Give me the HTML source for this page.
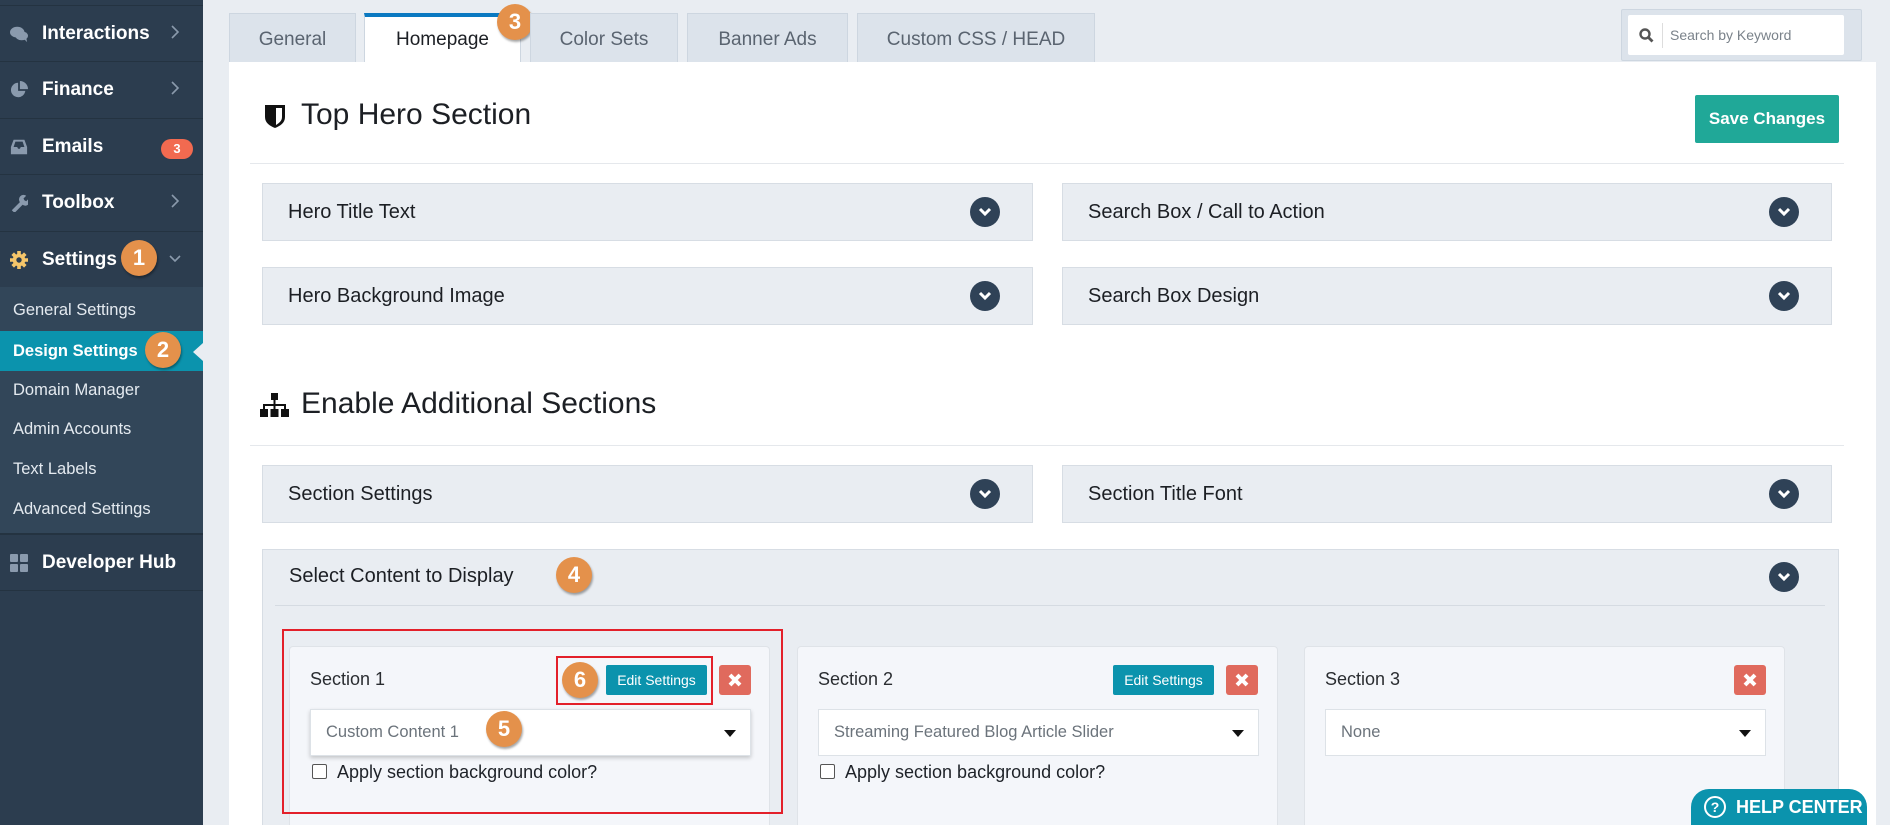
<!DOCTYPE html>
<html style="width:1890px;height:825px;overflow:hidden"><head><meta charset="utf-8"><style>
*{box-sizing:border-box;margin:0;padding:0}
body{width:1890px;height:825px;overflow:hidden;background:#e9edf2;font-family:"Liberation Sans",sans-serif;position:relative;color:#1e2228}
.abs{position:absolute}
#sb{left:0;top:0;width:203px;height:825px;background:#2c3d4f}
.it{position:absolute;left:0;width:203px;height:56px;border-top:1px solid #243341;color:#fff;font-size:19px;font-weight:bold;display:flex;align-items:center;padding-left:42px}
.it .ic{position:absolute;left:10px;top:19px;width:18px;height:18px}
.it .ch{position:absolute;left:170px;top:18px;width:10px;height:16px}
#sub{left:0;top:287px;width:203px;height:246px;background:#324659}
.si{position:absolute;left:13px;color:#e4eaf0;font-size:16.5px}
.badge{position:absolute;width:36px;height:36px;border-radius:50%;background:#e4914b;color:#fff;font-weight:bold;font-size:22px;text-align:center;line-height:36px;box-shadow:1px 2px 2px rgba(0,0,0,.35)}
.tab{position:absolute;top:13px;height:50px;background:#dce3eb;border:1px solid #cdd6e0;border-bottom:none;color:#5a6470;font-size:19px;text-align:center;line-height:52px}
#panel{left:229px;top:62px;width:1647px;height:763px;background:#fff}
.h{position:absolute;font-size:30px;color:#1c1f24}
.hr{position:absolute;left:250px;width:1594px;height:1px;background:#e5e8ec}
.acc{position:absolute;height:58px;background:#e9edf2;border:1px solid #d7dde4;font-size:20px;padding-left:25px;line-height:56px;color:#1c1f24}
.cv{position:absolute;right:32px;top:13px;width:30px;height:30px;border-radius:50%;background:#2f4257}
.cv svg{position:absolute;left:8px;top:9px}
.card{position:absolute;top:646px;width:481px;height:179px;background:#f4f6fa;border:1px solid #dfe3e8;border-bottom:none;border-radius:4px 4px 0 0}
.ct{position:absolute;left:20px;top:22px;font-size:18px;color:#2a2d31}
.sel{position:absolute;left:20px;top:62px;width:441px;height:47px;background:#fff;border:1px solid #dde2e7;font-size:16.5px;color:#6b737b;padding-left:15px;line-height:45px}
.sel:after{content:"";position:absolute;right:14px;top:20px;border:6px solid transparent;border-top:7px solid #111}
.cb{position:absolute;left:22px;top:115px;font-size:18px;color:#1e2228}
.cb i{display:inline-block;width:15px;height:15px;border:1.5px solid #555;border-radius:2px;background:#fff;vertical-align:-1px;margin-right:10px}
.es{position:absolute;top:18px;width:101px;height:30px;background:#0b93ad;color:#fff;font-size:14px;text-align:center;line-height:30px;border-radius:2px}
.x{position:absolute;top:18px;width:32px;height:30px;background:#e06a5d;border-radius:3px}
</style></head><body>
<div id="sb" class="abs">
 <div class="it" style="top:5px">Interactions<svg class="ch" viewBox="0 0 10 16"><path d="M2 2l6 6-6 6" fill="none" stroke="#8a9aac" stroke-width="1.6"/></svg>
  <svg class="ic" viewBox="0 0 20 18"><ellipse cx="8" cy="7" rx="8" ry="6" fill="#8a9aad"/><ellipse cx="13" cy="11" rx="7" ry="5" fill="#8a9aad"/><path d="M15 14l4 4-1-5z" fill="#8a9aad"/></svg></div>
 <div class="it" style="top:61px">Finance<svg class="ch" viewBox="0 0 10 16"><path d="M2 2l6 6-6 6" fill="none" stroke="#8a9aac" stroke-width="1.6"/></svg>
  <svg class="ic" viewBox="0 0 20 20"><path d="M9 2a8 8 0 1 0 8 9H9z" fill="#8a9aad"/><path d="M11 0v9h9a9 9 0 0 0-9-9z" fill="#8a9aad"/></svg></div>
 <div class="it" style="top:118px">Emails<span style="position:absolute;left:161px;top:20px;width:32px;height:20px;border-radius:10px;background:#f26a50;font-size:13px;text-align:center;line-height:20px">3</span>
  <svg class="ic" viewBox="0 0 20 18"><path d="M1 9l3-8h12l3 8v8H1z M4 9h4l1 2h2l1-2h4l-2-6H6z" fill="#8a9aad" fill-rule="evenodd"/></svg></div>
 <div class="it" style="top:174px">Toolbox<svg class="ch" viewBox="0 0 10 16"><path d="M2 2l6 6-6 6" fill="none" stroke="#8a9aac" stroke-width="1.6"/></svg>
  <svg class="ic" viewBox="0 0 20 20"><path d="M2 18l9-9a5 5 0 0 1 7-7l-3 3 1 2 2 1 3-3a5 5 0 0 1-7 7l-9 9z" fill="#8a9aad"/></svg></div>
 <div class="it" style="top:231px">Settings<svg class="ch" style="width:14px;left:168px;top:22px;height:10px" viewBox="0 0 14 10"><path d="M2 2l5 5 5-5" fill="none" stroke="#8a9aac" stroke-width="1.6"/></svg>
  <svg class="ic" viewBox="0 0 20 20"><circle cx="10" cy="10" r="7" fill="#f6c66a"/><g stroke="#f6c66a" stroke-width="4"><path d="M10 0v20M0 10h20M3 3l14 14M17 3L3 17"/></g><circle cx="10" cy="10" r="3" fill="#2c3d4f"/></svg></div>
 <div class="badge" style="left:121px;top:240px">1</div>
</div>
<div id="sub" class="abs">
 <div class="si" style="top:14px">General Settings</div>
 <div style="position:absolute;left:0;top:44px;width:203px;height:40px;background:#0b93ad"></div>
 <div class="si" style="top:55px;color:#fff;font-weight:bold">Design Settings</div>
 <div style="position:absolute;left:193px;top:56px;border:9px solid transparent;border-right:10px solid #e9edf2;border-left:none"></div>
 <div class="badge" style="left:145px;top:45px">2</div>
 <div class="si" style="top:94px">Domain Manager</div>
 <div class="si" style="top:133px">Admin Accounts</div>
 <div class="si" style="top:173px">Text Labels</div>
 <div class="si" style="top:213px">Advanced Settings</div>
</div>
<div class="it" style="top:533px;border-top:2px solid #243341;height:58px;border-bottom:1px solid #243341">Developer Hub
 <svg class="ic" viewBox="0 0 18 18"><rect x="0" y="0" width="8" height="8" rx="1" fill="#8a9aad"/><rect x="10" y="0" width="8" height="8" rx="1" fill="#8a9aad"/><rect x="0" y="10" width="8" height="8" rx="1" fill="#8a9aad"/><rect x="10" y="10" width="8" height="8" rx="1" fill="#8a9aad"/></svg></div>

<div class="tab" style="left:229px;width:127px">General</div>
<div class="tab" style="left:364px;width:157px;background:#fff;color:#1c1f24;border-top:4px solid #0b79c1;line-height:46px">Homepage</div>
<div class="badge" style="left:497px;top:4px">3</div>
<div class="tab" style="left:530px;width:148px">Color Sets</div>
<div class="tab" style="left:687px;width:161px">Banner Ads</div>
<div class="tab" style="left:857px;width:238px">Custom CSS / HEAD</div>
<div class="abs" style="left:1621px;top:9px;width:241px;height:52px;background:#dce3eb;border:1px solid #cdd6e0;border-radius:2px"></div>
<div class="abs" style="left:1628px;top:15px;width:216px;height:40px;background:#fff;border-radius:2px;font-size:14px;color:#7a828a;line-height:40px;padding-left:42px">Search by Keyword
 <svg style="position:absolute;left:11px;top:13px" width="15" height="15" viewBox="0 0 15 15"><circle cx="6" cy="6" r="4.5" fill="none" stroke="#555" stroke-width="2.4"/><path d="M9.5 9.5l4 4" stroke="#555" stroke-width="2.8"/></svg>
 <span style="position:absolute;left:34px;top:8px;width:1px;height:25px;background:#ddd"></span></div>

<div id="panel" class="abs"></div>
<svg class="abs" style="left:264px;top:104px" width="22" height="25" viewBox="0 0 22 25"><path d="M1 1h20v12c0 6-5 9-10 11C6 22 1 19 1 13z" fill="#111"/><path d="M12 4h6v9c0 4-3 6-6 8z" fill="#fff"/></svg>
<div class="h" style="left:301px;top:98px">Top Hero Section</div>
<div class="abs" style="left:1695px;top:95px;width:144px;height:48px;background:#20a898;border-radius:2px;color:#fff;font-size:17px;font-weight:bold;text-align:center;line-height:48px">Save Changes</div>
<div class="hr" style="top:163px"></div>
<div class="acc" style="left:262px;top:183px;width:771px">Hero Title Text<span class="cv"><svg width="14" height="12" viewBox="0 0 14 12"><path d="M2 3l5 5 5-5" fill="none" stroke="#fff" stroke-width="3"/></svg></span></div>
<div class="acc" style="left:1062px;top:183px;width:770px">Search Box / Call to Action<span class="cv"><svg width="14" height="12" viewBox="0 0 14 12"><path d="M2 3l5 5 5-5" fill="none" stroke="#fff" stroke-width="3"/></svg></span></div>
<div class="acc" style="left:262px;top:267px;width:771px">Hero Background Image<span class="cv"><svg width="14" height="12" viewBox="0 0 14 12"><path d="M2 3l5 5 5-5" fill="none" stroke="#fff" stroke-width="3"/></svg></span></div>
<div class="acc" style="left:1062px;top:267px;width:770px">Search Box Design<span class="cv"><svg width="14" height="12" viewBox="0 0 14 12"><path d="M2 3l5 5 5-5" fill="none" stroke="#fff" stroke-width="3"/></svg></span></div>

<svg class="abs" style="left:260px;top:393px" width="29" height="25" viewBox="0 0 29 25"><rect x="11" y="0" width="7" height="7" fill="#111"/><path d="M14.5 7v5M4 16v-4h21v4M14.5 12v4" stroke="#111" stroke-width="2" fill="none"/><rect x="0" y="16" width="8" height="8" fill="#111"/><rect x="10.5" y="16" width="8" height="8" fill="#111"/><rect x="21" y="16" width="8" height="8" fill="#111"/></svg>
<div class="h" style="left:301px;top:387px">Enable Additional Sections</div>
<div class="hr" style="top:445px"></div>
<div class="acc" style="left:262px;top:465px;width:771px">Section Settings<span class="cv"><svg width="14" height="12" viewBox="0 0 14 12"><path d="M2 3l5 5 5-5" fill="none" stroke="#fff" stroke-width="3"/></svg></span></div>
<div class="acc" style="left:1062px;top:465px;width:770px">Section Title Font<span class="cv"><svg width="14" height="12" viewBox="0 0 14 12"><path d="M2 3l5 5 5-5" fill="none" stroke="#fff" stroke-width="3"/></svg></span></div>

<div class="abs" style="left:262px;top:549px;width:1577px;height:276px;background:#e9edf2;border:1px solid #d7dde4;border-bottom:none"></div>
<div class="abs" style="left:289px;top:565px;font-size:20px;color:#1c1f24">Select Content to Display</div>
<div class="badge" style="left:556px;top:557px">4</div>
<span class="cv abs" style="left:1769px;right:auto;top:562px"><svg width="14" height="12" viewBox="0 0 14 12"><path d="M2 3l5 5 5-5" fill="none" stroke="#fff" stroke-width="3"/></svg></span>
<div class="abs" style="left:275px;top:605px;width:1550px;height:1px;background:#d5dbe2"></div>

<div class="card" style="left:289px">
 <div class="ct">Section 1</div>
 <div class="es" style="left:316px">Edit Settings</div>
 <div class="x" style="left:429px"><svg width="32" height="30" viewBox="0 0 32 30"><path d="M11 10l10 10M21 10L11 20" stroke="#fff" stroke-width="4"/></svg></div>
 <div class="sel" style="box-shadow:0 2px 4px rgba(0,0,0,.2)">Custom Content 1</div>
 <div class="cb"><i></i>Apply section background color?</div>
</div>
<div class="badge" style="left:486px;top:711px">5</div>
<div class="abs" style="left:282px;top:629px;width:501px;height:185px;border:2px solid #e3202a"></div>
<div class="abs" style="left:556px;top:656px;width:157px;height:49px;border:2px solid #e3202a"></div>
<div class="badge" style="left:562px;top:662px">6</div>

<div class="card" style="left:797px">
 <div class="ct">Section 2</div>
 <div class="es" style="left:315px">Edit Settings</div>
 <div class="x" style="left:428px"><svg width="32" height="30" viewBox="0 0 32 30"><path d="M11 10l10 10M21 10L11 20" stroke="#fff" stroke-width="4"/></svg></div>
 <div class="sel">Streaming Featured Blog Article Slider</div>
 <div class="cb"><i></i>Apply section background color?</div>
</div>
<div class="card" style="left:1304px">
 <div class="ct">Section 3</div>
 <div class="x" style="left:429px"><svg width="32" height="30" viewBox="0 0 32 30"><path d="M11 10l10 10M21 10L11 20" stroke="#fff" stroke-width="4"/></svg></div>
 <div class="sel">None</div>
</div>
<div class="abs" style="left:1691px;top:789px;width:176px;height:36px;background:#0b93ad;border-radius:18px 18px 0 0;color:#fff;font-weight:bold;font-size:18px;line-height:36px;padding-left:45px">HELP CENTER
 <span style="position:absolute;left:13px;top:7px;width:22px;height:22px;border:2px solid #fff;border-radius:50%;font-size:14px;line-height:19px;text-align:center;padding:0">?</span></div>
</body></html>
